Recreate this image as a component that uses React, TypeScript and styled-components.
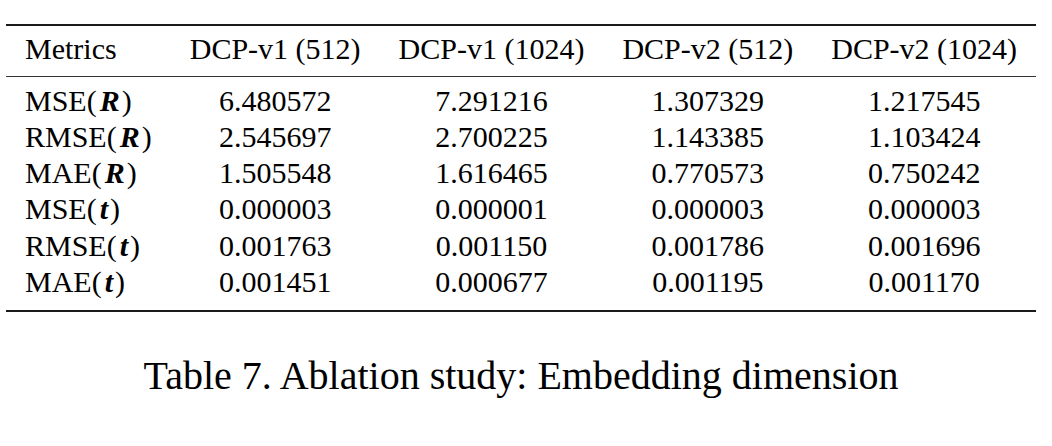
import React from "react";
import type { FC } from "react";
import styled, { createGlobalStyle } from "styled-components";

interface IRow {
  metric: string;
  symbol: string;
  values: string[];
}

const columns = ["DCP-v1 (512)", "DCP-v1 (1024)", "DCP-v2 (512)", "DCP-v2 (1024)"];

const rows: IRow[] = [
  { metric: "MSE", symbol: "R", values: ["6.480572", "7.291216", "1.307329", "1.217545"] },
  { metric: "RMSE", symbol: "R", values: ["2.545697", "2.700225", "1.143385", "1.103424"] },
  { metric: "MAE", symbol: "R", values: ["1.505548", "1.616465", "0.770573", "0.750242"] },
  { metric: "MSE", symbol: "t", values: ["0.000003", "0.000001", "0.000003", "0.000003"] },
  { metric: "RMSE", symbol: "t", values: ["0.001763", "0.001150", "0.001786", "0.001696"] },
  { metric: "MAE", symbol: "t", values: ["0.001451", "0.000677", "0.001195", "0.001170"] },
];

const App: FC = () => {
  return (
    <>
      <GlobalStyle />
      <Page>
        <Table>
          <thead>
            <tr>
              <HeadCell $align="left">Metrics</HeadCell>
              {columns.map((col) => (
                <HeadCell key={`head_${col}`} $align="center">
                  {col}
                </HeadCell>
              ))}
            </tr>
          </thead>
          <Body>
            {rows.map((row) => (
              <tr key={`row_${row.metric}_${row.symbol}`}>
                <Cell $align="left">
                  {row.metric}(<Symbol>{row.symbol}</Symbol>)
                </Cell>
                {row.values.map((value, i) => (
                  <Cell key={`cell_${row.metric}_${row.symbol}_${i}`} $align="center">
                    {value}
                  </Cell>
                ))}
              </tr>
            ))}
          </Body>
          <Caption>Table 7. Ablation study: Embedding dimension</Caption>
        </Table>
      </Page>
    </>
  );
};

export default App;

const GlobalStyle = createGlobalStyle`
  html, body {
    margin: 0;
    padding: 0;
    background: #ffffff;
  }
  body {
    font-family: "Liberation Serif", "Times New Roman", serif;
    color: #000000;
  }
`;

const Page = styled.div`
  padding: 24px 0 0 6px;
`;

const Table = styled.table`
  border-collapse: separate;
  border-spacing: 0;
  font-size: 30px;
  line-height: 36.2px;
`;

const HeadCell = styled.th<{ $align: "left" | "center" }>`
  font-weight: 400;
  text-align: ${(p) => p.$align};
  white-space: nowrap;
  padding: 5px 19px 8.5px;
  border-top: 2px solid #1a1a1a;
  border-bottom: 1px solid #333333;
`;

const Body = styled.tbody`
  tr:first-child td {
    padding-top: 6px;
  }
  tr:last-child td {
    padding-bottom: 10px;
    border-bottom: 2px solid #1a1a1a;
  }
`;

const Cell = styled.td<{ $align: "left" | "center" }>`
  text-align: ${(p) => p.$align};
  white-space: nowrap;
  padding: 0 19px;
`;

const Symbol = styled.b`
  font-style: italic;
  font-weight: 700;
  padding: 0 2px 0 3px;
`;

const Caption = styled.caption`
  caption-side: bottom;
  font-size: 40px;
  line-height: 46px;
  padding-top: 41px;
  text-align: center;
  white-space: nowrap;
`;
